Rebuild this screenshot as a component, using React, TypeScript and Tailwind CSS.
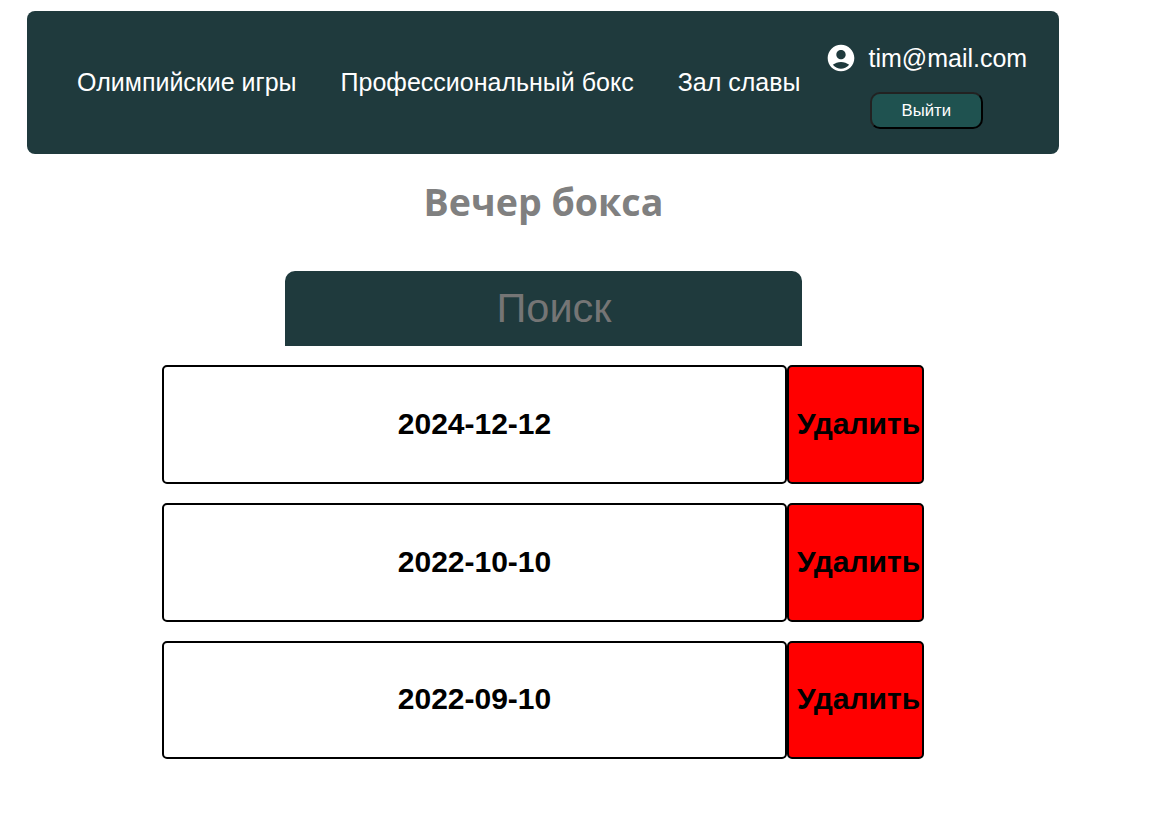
import React from "react";

const dates = ["2024-12-12", "2022-10-10", "2022-09-10"];

const App: React.FC = () => {
  return (
    <div className="h-[821px] w-[1174px] bg-white font-['Liberation_Sans',Arial,sans-serif] overflow-hidden">
      {/* Header */}
      <nav className="ml-[27px] mt-[11px] h-[143px] w-[1032px] rounded-lg bg-[#1f3a3d] flex items-center pl-[50px] text-white text-[25px] float-left">
        <a className="whitespace-nowrap">Олимпийские игры</a>
        <a className="ml-[44px] whitespace-nowrap">Профессиональный бокс</a>
        <a className="ml-[44px] whitespace-nowrap">Зал славы</a>
        <div className="ml-[25px] pt-[4px] flex flex-col items-center">
          <div className="flex items-center gap-[11px]">
            <svg className="-mt-[1px]" width="32" height="32" viewBox="0 0.75 24 24" fill="currentColor">
              <path d="M12 2C6.48 2 2 6.48 2 12s4.48 10 10 10 10-4.48 10-10S17.52 2 12 2zm0 4c1.93 0 3.5 1.57 3.5 3.5S13.93 13 12 13s-3.5-1.57-3.5-3.5S10.07 6 12 6zm0 14c-2.03 0-4.43-.82-6.14-2.88C7.55 15.8 9.68 15 12 15s4.45.8 6.14 2.12C16.43 19.18 14.03 20 12 20z" />
            </svg>
            <span className="pb-[2px]">tim@mail.com</span>
          </div>
          <button className="mt-[13px] h-[37px] w-[113px] rounded-[10px] bg-[#1f5250] border-2 border-t-[#222] border-l-[#222] border-b-black border-r-black text-[16.7px] text-white">
            Выйти
          </button>
        </div>
      </nav>

      <div className="clear-both">
        <h1 className="pt-[23px] text-center w-[1087px] font-['Open_Sans',sans-serif] font-bold text-[37.6px] leading-[50px] text-[#808080]">
          Вечер бокса
        </h1>
        <div className="ml-[285px] mt-[44px] h-[75px] w-[517px] rounded-t-[10px] bg-[#1f3a3d] flex items-center justify-center pl-[21px] text-[41.5px] text-[#757575]">
          Поиск
        </div>
        <div className="ml-[162px] mt-[19px] flex flex-col gap-[19px]">
          {dates.map((d) => (
            <div key={d} className="flex h-[118.8px]">
              <div className="w-[625px] rounded-[5px] border-2 border-black pb-[2px] flex items-center justify-center font-bold text-[30px] text-black">
                {d}
              </div>
              <button className="w-[137px] rounded-[5px] border-2 border-black bg-[#ff0000] pl-[8px] pb-[2px] text-left font-bold text-[30px] text-black whitespace-nowrap">
                Удалить
              </button>
            </div>
          ))}
        </div>
      </div>
    </div>
  );
};

export default App;
